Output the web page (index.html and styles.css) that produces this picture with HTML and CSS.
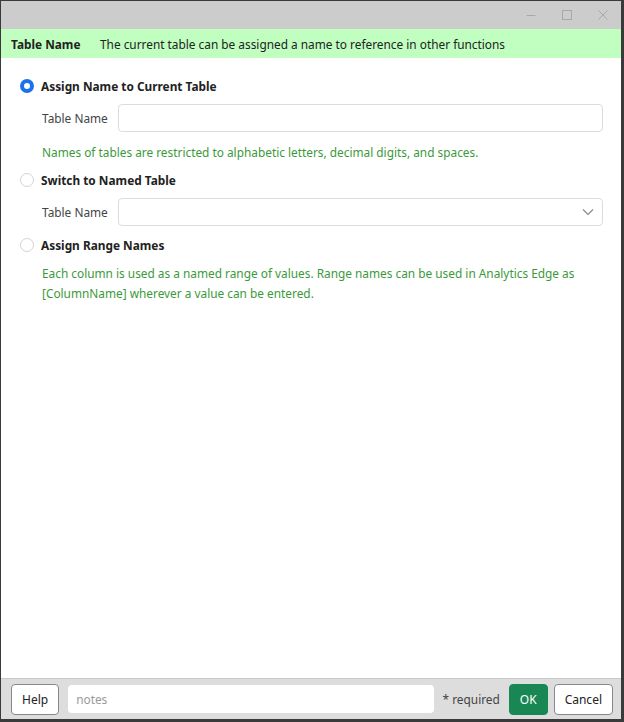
FILE: index.html
```html
<!DOCTYPE html>
<html>
<head>
<meta charset="utf-8">
<link rel="stylesheet" href="styles.css">
</head>
<body>
<div class="window">
  <div class="titlebar">
    <span class="tb-btn"><svg width="12" height="12" viewBox="0 0 12 12"><path d="M1.5 6.5h9" stroke="#a8a8a8" stroke-width="1"/></svg></span>
    <span class="tb-btn"><svg width="12" height="12" viewBox="0 0 12 12"><rect x="1.5" y="1.5" width="9" height="9" fill="none" stroke="#a8a8a8" stroke-width="1"/></svg></span>
    <span class="tb-btn"><svg width="12" height="12" viewBox="0 0 12 12"><path d="M1.5 1.5l9 9M10.5 1.5l-9 9" stroke="#a8a8a8" stroke-width="1"/></svg></span>
  </div>
  <div class="banner">
    <span class="banner-title">Table Name</span>
    <span class="banner-text">The current table can be assigned a name to reference in other functions</span>
  </div>
  <div class="content">
    <label class="radio-row first">
      <span class="radio checked"></span>
      <span class="radio-label">Assign Name to Current Table</span>
    </label>
    <div class="field-row">
      <span class="field-label">Table Name</span>
      <div class="input"></div>
    </div>
    <div class="hint">Names of tables are restricted to alphabetic letters, decimal digits, and spaces.</div>
    <label class="radio-row">
      <span class="radio"></span>
      <span class="radio-label">Switch to Named Table</span>
    </label>
    <div class="field-row">
      <span class="field-label">Table Name</span>
      <div class="input select"><svg width="12" height="8" viewBox="0 0 12 8"><path d="M1 1.5l5 5 5-5" fill="none" stroke="#8a8a8a" stroke-width="1.2"/></svg></div>
    </div>
    <label class="radio-row third">
      <span class="radio"></span>
      <span class="radio-label">Assign Range Names</span>
    </label>
    <div class="hint multi">Each column is used as a named range of values. Range names can be used in Analytics Edge as [ColumnName] wherever a value can be entered.</div>
  </div>
  <div class="footer">
    <button class="btn">Help</button>
    <div class="notes">notes</div>
    <span class="required">* required</span>
    <button class="btn ok">OK</button>
    <button class="btn">Cancel</button>
  </div>
</div>
</body>
</html>
```
FILE: styles.css
```css
* { box-sizing: border-box; }
html, body { margin: 0; padding: 0; }
body {
  width: 624px;
  height: 722px;
  background: #333;
  font-family: "Noto Sans", "Open Sans", sans-serif;
  font-size: 11.85px;
  color: #222;
}
.window {
  width: 624px;
  height: 722px;
  border-top: 1px solid #3a3a3a;
  border-left: 1px solid #3a3a3a;
  border-right: 3px solid #3a3a3a;
  border-bottom: 3px solid #3a3a3a;
  display: flex;
  flex-direction: column;
  background: #fff;
}
.titlebar {
  height: 28px;
  background: #cccccc;
  display: flex;
  justify-content: flex-end;
  align-items: center;
  padding-right: 12px;
  gap: 24px;
}
.tb-btn { width: 12px; height: 12px; display: flex; }
.banner {
  height: 29px;
  background: #c0ffc0;
  display: flex;
  align-items: center;
  padding-left: 10px;
}
.banner-title { font-weight: bold; width: 89px; }
.banner-text { color: #222; }
.content {
  flex: 1;
  padding: 0 18px 0 19px;
}
.radio-row {
  display: flex;
  align-items: center;
  height: 20px;
  margin-top: 8px;
}
.radio-row.first { margin-top: 18px; }
.radio-row.third { margin-top: 9px; }
.radio {
  width: 14px;
  height: 14px;
  border-radius: 50%;
  border: 1px solid #d4d4d4;
  background: #fff;
  margin-right: 7px;
}
.radio.checked {
  border: 4px solid #1a73e8;
}
.radio-label { font-weight: bold; }
.field-row {
  display: flex;
  align-items: center;
  margin: 8px 0 0 22px;
}
.field-label { width: 76px; color: #444; }
.input {
  flex: 1;
  height: 28px;
  border: 1px solid #dcdcdc;
  border-radius: 4px;
  background: #fff;
}
.select {
  display: flex;
  align-items: center;
  justify-content: flex-end;
  padding-right: 8px;
}
.hint {
  color: #3a9a3a;
  margin: 10px 0 0 22px;
  line-height: 20px;
}
.hint.multi { margin-top: 8px; }
.footer {
  height: 41px;
  background: #dddddd;
  border-top: 1px solid #c8c8c8;
  display: flex;
  align-items: center;
  padding: 0 8px 0 10px;
}
.btn {
  font-family: inherit;
  font-size: 12px;
  height: 31px;
  padding: 0 10px;
  background: #fff;
  border: 1px solid #888;
  border-radius: 4px;
  color: #222;
}
.notes {
  flex: 1;
  height: 28px;
  margin: 0 9px;
  background: #fff;
  border-radius: 4px;
  color: #999;
  display: flex;
  align-items: center;
  padding-left: 8px;
}
.required { color: #444; margin-right: 9px; }
.btn.ok {
  background: #198754;
  border-color: #198754;
  color: #fff;
  margin-right: 6px;
}
```
